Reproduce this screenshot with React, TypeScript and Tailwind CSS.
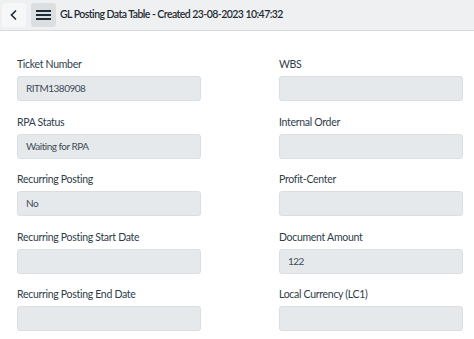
import React from "react";

const fields: [string, string][] = [
  ["Ticket Number", "RITM1380908"],
  ["WBS", ""],
  ["RPA Status", "Waiting for RPA"],
  ["Internal Order", ""],
  ["Recurring Posting", "No"],
  ["Profit-Center", ""],
  ["Recurring Posting Start Date", ""],
  ["Document Amount", "122"],
  ["Recurring Posting End Date", ""],
  ["Local Currency (LC1)", ""],
];

const Field = ({ label, value }: { label: string; value: string }) => (
  <div className="flex flex-col">
    <label className="h-[20px] text-[10.5px] leading-[16px] tracking-[-0.3px] text-[#2e3d49]">{label}</label>
    <div className="h-[25px] rounded-[3px] border border-[#dadee0] bg-[#e6e9eb] px-[8px] flex items-center text-[10px] tracking-[-0.5px] text-[#3e4c57]">
      {value}
    </div>
  </div>
);

export default function App() {
  return (
    <div className="w-[474px] h-[339px] overflow-hidden bg-white" style={{ fontFamily: "Lato, 'Open Sans', sans-serif" }}>
      <div className="h-[31px] bg-[#eef0f1] border-b border-[#d6dadc] flex items-center pl-[2px]">
        <button className="w-[24px] h-[24px] rounded-[3px] bg-[#f6f7f7] flex items-center justify-center">
          <svg width="12" height="12" viewBox="0 0 12 12" fill="none" stroke="#1f2a33" strokeWidth="1.6">
            <path d="M8 1.5 3.5 6 8 10.5" />
          </svg>
        </button>
        <button className="ml-[5px] w-[25px] h-[24px] rounded-[3px] bg-[#dcdfe1] flex items-center justify-center">
          <svg width="15" height="12" viewBox="0 0 15 12" fill="#1f2a33">
            <rect x="0" y="1" width="15" height="2" />
            <rect x="0" y="5" width="15" height="2" />
            <rect x="0" y="9" width="15" height="2" />
          </svg>
        </button>
        <span className="ml-[4px] text-[10.5px] font-semibold text-[#1f2a33] tracking-[-0.55px]">
          GL Posting Data Table - Created 23-08-2023 10:47:32
        </span>
      </div>
      <div className="grid grid-cols-2 gap-x-[78px] gap-y-[12.5px] pl-[17px] pr-[11px] pt-[25px]">
        {fields.map(([l, v]) => (
          <Field key={l} label={l} value={v} />
        ))}
      </div>
    </div>
  );
}
